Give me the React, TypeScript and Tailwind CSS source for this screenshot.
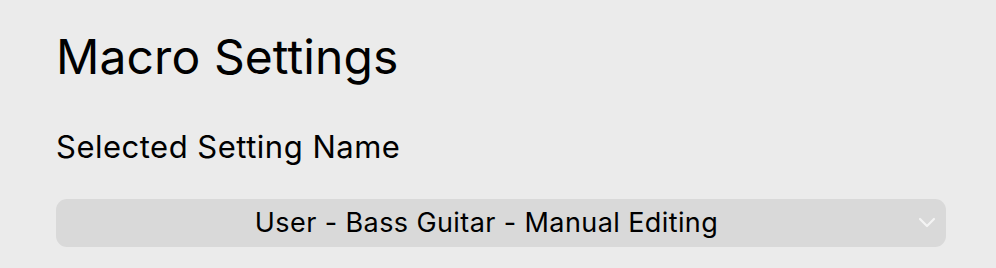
export default function App() {
  return (
    <div
      className="w-[996px] h-[268px] bg-[#ebebeb] px-[56px] pt-[28px] text-black"
      style={{ fontFamily: "Inter, 'Liberation Sans', sans-serif" }}
    >
      <h1 className="text-[48px] leading-[58px] font-normal tracking-[0.1px]">Macro Settings</h1>
      <div className="mt-[42px] text-[31px] leading-[38px] tracking-[0.5px]">Selected Setting Name</div>
      <div className="mt-[33px] relative flex items-center h-[48px] w-[890px] rounded-[11px] bg-[#d9d9d9]">
        <div className="flex-1 pr-[29px] text-center text-[27px] leading-[36px] tracking-[0.4px]">
          User - Bass Guitar - Manual Editing
        </div>
        <svg
          className="absolute right-[10px] top-[18px]"
          width="18"
          height="11"
          viewBox="0 0 18 11"
          fill="none"
        >
          <path d="M2 2 L9 9 L16 2" stroke="#f4f4f4" strokeWidth="2.2" strokeLinecap="round" strokeLinejoin="round" />
        </svg>
      </div>
    </div>
  );
}
